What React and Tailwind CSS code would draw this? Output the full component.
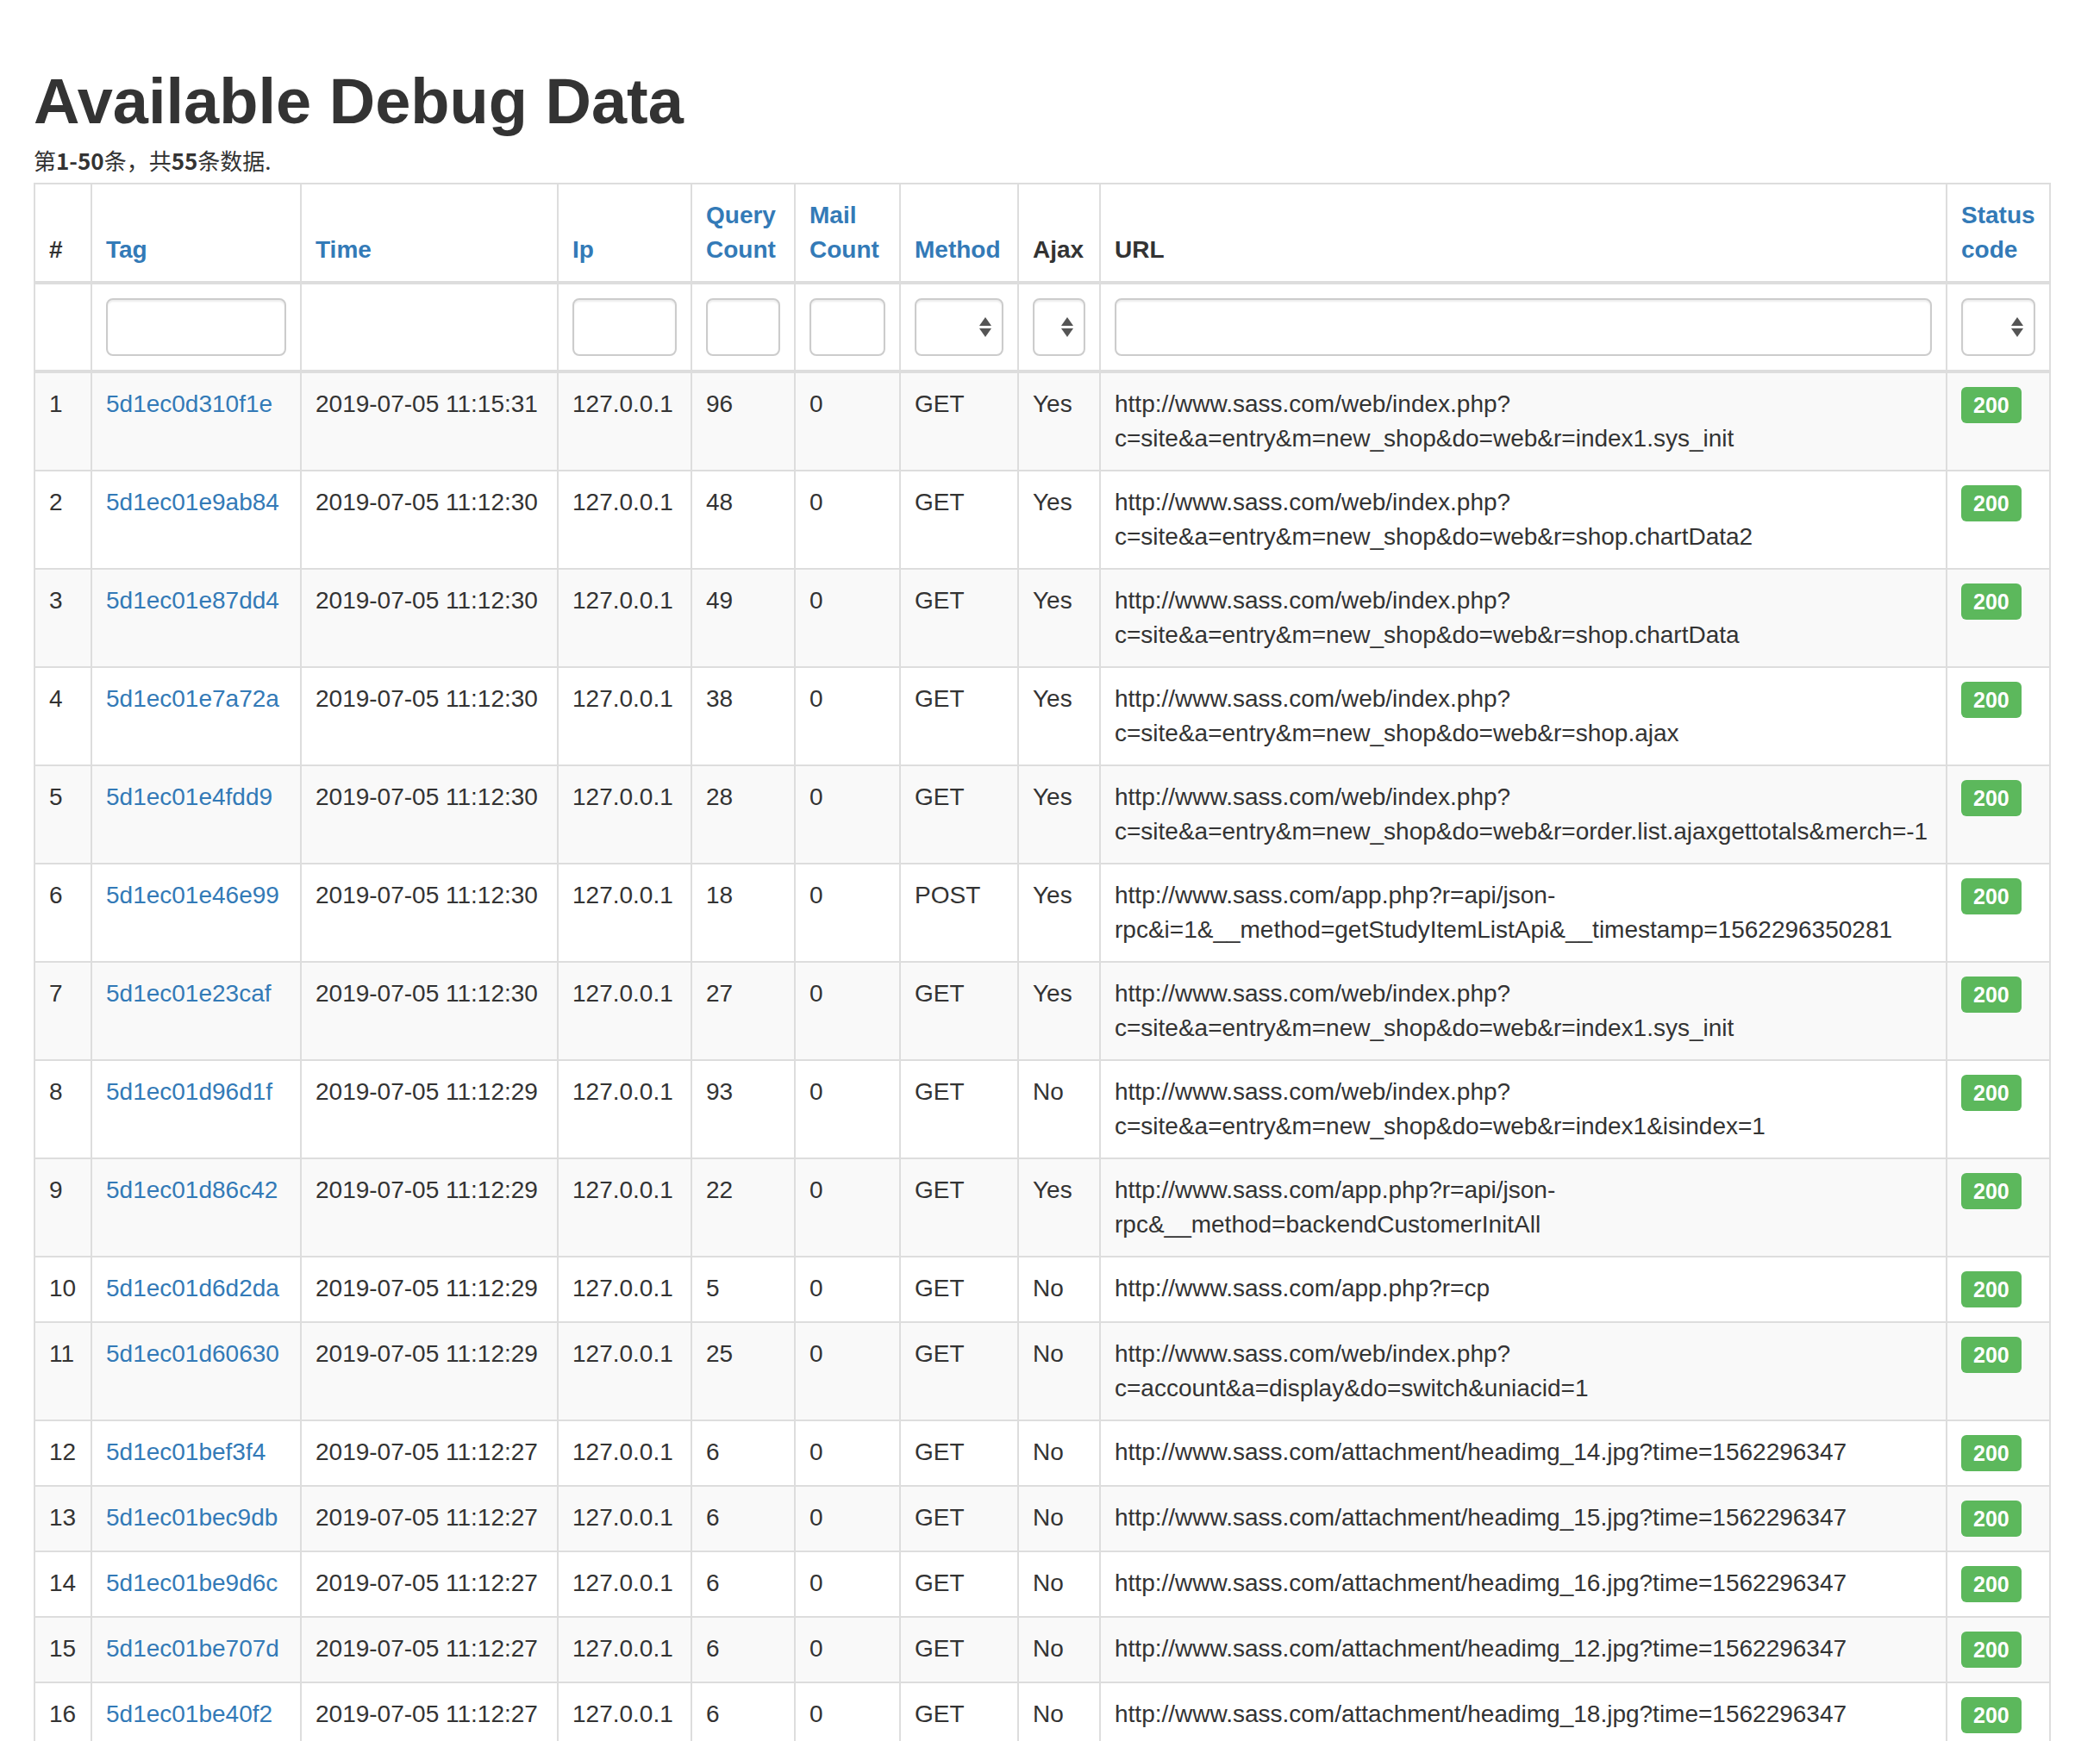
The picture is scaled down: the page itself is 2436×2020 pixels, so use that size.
const rows = [
  ["5d1ec0d310f1e", "2019-07-05 11:15:31", "96", "GET", "Yes", ["http://www.sass.com/web/index.php?", "c=site&a=entry&m=new_shop&do=web&r=index1.sys_init"]],
  ["5d1ec01e9ab84", "2019-07-05 11:12:30", "48", "GET", "Yes", ["http://www.sass.com/web/index.php?", "c=site&a=entry&m=new_shop&do=web&r=shop.chartData2"]],
  ["5d1ec01e87dd4", "2019-07-05 11:12:30", "49", "GET", "Yes", ["http://www.sass.com/web/index.php?", "c=site&a=entry&m=new_shop&do=web&r=shop.chartData"]],
  ["5d1ec01e7a72a", "2019-07-05 11:12:30", "38", "GET", "Yes", ["http://www.sass.com/web/index.php?", "c=site&a=entry&m=new_shop&do=web&r=shop.ajax"]],
  ["5d1ec01e4fdd9", "2019-07-05 11:12:30", "28", "GET", "Yes", ["http://www.sass.com/web/index.php?", "c=site&a=entry&m=new_shop&do=web&r=order.list.ajaxgettotals&merch=-1"]],
  ["5d1ec01e46e99", "2019-07-05 11:12:30", "18", "POST", "Yes", ["http://www.sass.com/app.php?r=api/json-", "rpc&i=1&__method=getStudyItemListApi&__timestamp=1562296350281"]],
  ["5d1ec01e23caf", "2019-07-05 11:12:30", "27", "GET", "Yes", ["http://www.sass.com/web/index.php?", "c=site&a=entry&m=new_shop&do=web&r=index1.sys_init"]],
  ["5d1ec01d96d1f", "2019-07-05 11:12:29", "93", "GET", "No", ["http://www.sass.com/web/index.php?", "c=site&a=entry&m=new_shop&do=web&r=index1&isindex=1"]],
  ["5d1ec01d86c42", "2019-07-05 11:12:29", "22", "GET", "Yes", ["http://www.sass.com/app.php?r=api/json-", "rpc&__method=backendCustomerInitAll"]],
  ["5d1ec01d6d2da", "2019-07-05 11:12:29", "5", "GET", "No", ["http://www.sass.com/app.php?r=cp"]],
  ["5d1ec01d60630", "2019-07-05 11:12:29", "25", "GET", "No", ["http://www.sass.com/web/index.php?", "c=account&a=display&do=switch&uniacid=1"]],
  ["5d1ec01bef3f4", "2019-07-05 11:12:27", "6", "GET", "No", ["http://www.sass.com/attachment/headimg_14.jpg?time=1562296347"]],
  ["5d1ec01bec9db", "2019-07-05 11:12:27", "6", "GET", "No", ["http://www.sass.com/attachment/headimg_15.jpg?time=1562296347"]],
  ["5d1ec01be9d6c", "2019-07-05 11:12:27", "6", "GET", "No", ["http://www.sass.com/attachment/headimg_16.jpg?time=1562296347"]],
  ["5d1ec01be707d", "2019-07-05 11:12:27", "6", "GET", "No", ["http://www.sass.com/attachment/headimg_12.jpg?time=1562296347"]],
  ["5d1ec01be40f2", "2019-07-05 11:12:27", "6", "GET", "No", ["http://www.sass.com/attachment/headimg_18.jpg?time=1562296347"]],
];

const td = "border-2 border-[#ddd] p-4 align-top";
const th = "border-2 border-[#ddd] border-b-4 p-4 align-bottom text-left font-bold";
const input = "h-[67px] w-full rounded-lg border-2 border-[#ccc] bg-white shadow-[inset_0_2px_2px_rgba(0,0,0,0.075)]";

function Select() {
  return (
    <div className={input + " flex items-center justify-end pr-3"}>
      <div className="flex flex-col gap-[3px]">
        <div className="h-0 w-0 border-x-[7px] border-b-[10px] border-x-transparent border-b-[#555]" />
        <div className="h-0 w-0 border-x-[7px] border-t-[10px] border-x-transparent border-t-[#555]" />
      </div>
    </div>
  );
}

export default function App() {
  return (
    <div className="bg-white px-[39px] pt-[78px] text-[28px] leading-[40px] text-[#333]" style={{ fontFamily: '"Liberation Sans", "Noto Sans CJK SC", sans-serif' }}>
      <h1 className="text-[74px] font-bold leading-[80px]">Available Debug Data</h1>
      <div className="mt-[10px] mb-[8px] text-[26px] leading-[36px]" style={{ fontFamily: '"Noto Sans CJK SC", sans-serif' }}>
        第<b>1-50</b>条，共<b>55</b>条数据.
      </div>
      <table className="w-[2340px] table-fixed border-collapse border-2 border-[#ddd]">
        <colgroup>
          <col className="w-[66px]" /><col className="w-[243px]" /><col className="w-[298px]" /><col className="w-[155px]" />
          <col className="w-[120px]" /><col className="w-[122px]" /><col className="w-[137px]" /><col className="w-[95px]" />
          <col /><col className="w-[120px]" />
        </colgroup>
        <thead>
          <tr>
            <th className={th}>#</th>
            <th className={th + " text-[#337ab7]"}>Tag</th>
            <th className={th + " text-[#337ab7]"}>Time</th>
            <th className={th + " text-[#337ab7]"}>Ip</th>
            <th className={th + " text-[#337ab7]"}>Query Count</th>
            <th className={th + " text-[#337ab7]"}>Mail Count</th>
            <th className={th + " text-[#337ab7]"}>Method</th>
            <th className={th}>Ajax</th>
            <th className={th}>URL</th>
            <th className={th + " text-[#337ab7]"}>Status code</th>
          </tr>
          <tr>
            <td className={td + " border-b-4"}></td>
            <td className={td + " border-b-4"}><div className={input} /></td>
            <td className={td + " border-b-4"}></td>
            <td className={td + " border-b-4"}><div className={input} /></td>
            <td className={td + " border-b-4"}><div className={input} /></td>
            <td className={td + " border-b-4"}><div className={input} /></td>
            <td className={td + " border-b-4"}><Select /></td>
            <td className={td + " border-b-4"}><Select /></td>
            <td className={td + " border-b-4"}><div className={input} /></td>
            <td className={td + " border-b-4"}><Select /></td>
          </tr>
        </thead>
        <tbody>
          {rows.map((r, i) => (
            <tr key={i} className={i % 2 === 0 ? "bg-[#f9f9f9]" : "bg-white"}>
              <td className={td}>{i + 1}</td>
              <td className={td + " text-[#337ab7]"}>{r[0]}</td>
              <td className={td}>{r[1]}</td>
              <td className={td}>127.0.0.1</td>
              <td className={td}>{r[2]}</td>
              <td className={td}>0</td>
              <td className={td}>{r[3]}</td>
              <td className={td}>{r[4]}</td>
              <td className={td}>{r[5].map((l, j) => <div key={j} className="whitespace-nowrap">{l}</div>)}</td>
              <td className={td}>
                <span className="inline-block rounded-md bg-[#5cb85c] px-[14px] text-[25px] font-bold leading-[42px] text-white">200</span>
              </td>
            </tr>
          ))}
        </tbody>
      </table>
    </div>
  );
}
